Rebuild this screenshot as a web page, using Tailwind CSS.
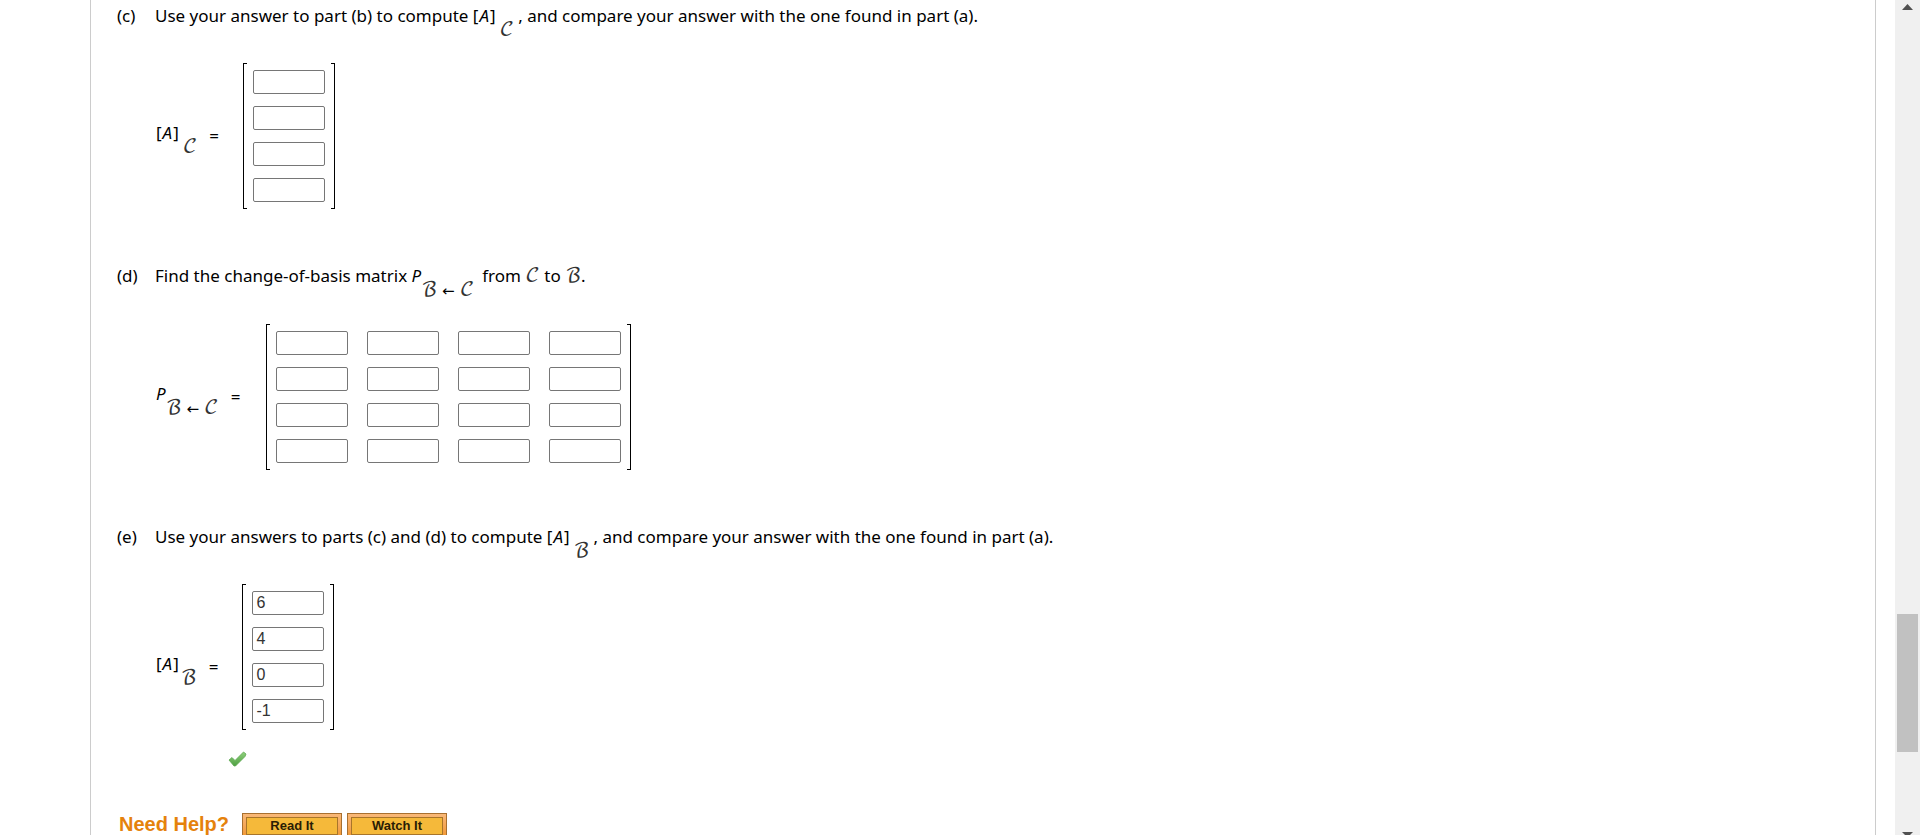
<!DOCTYPE html>
<html lang="en">
<head>
  <meta charset="UTF-8" />
  <meta name="viewport" content="width=device-width, initial-scale=1.0"/>
  <title>Change of Basis</title>
  <script src="https://cdn.jsdelivr.net/npm/@tailwindcss/browser@4"></script>
</head>
<body class="bg-white h-screen flex overflow-hidden text-[17px] leading-6 text-black font-['Noto_Sans',sans-serif]">

  <!-- Question -->
  <main class="flex-1 self-stretch ml-[90px] mr-[19px] pl-[26px] pt-1 border-x border-[#ccc]">

    <!-- Part (c) -->
    <section class="flex mb-[55px]">
      <span class="w-[38px] shrink-0">(c)</span>
      <div class="flex-1">
        <p class="mb-[33px]">Use your answer to part (b) to compute&nbsp;[<i class="px-px">A</i>]<span class="mx-1 align-[-14px] text-[20px] leading-[0] font-['DejaVu_Math_TeX_Gyre',serif] text-[#333]">𝒞</span>, and compare your answer with the one found in part (a).</p>
        <div class="flex items-center">
          <div class="ml-px mr-6 pb-1">[<i class="px-px">A</i>]<span class="ml-1 align-[-14px] text-[20px] leading-[0] font-['DejaVu_Math_TeX_Gyre',serif] text-[#333]">𝒞</span><span class="ml-3 align-[-3px] leading-[0]">=</span></div>
          <div id="matrixC" class="flex"></div>
        </div>
      </div>
    </section>

    <!-- Part (d) -->
    <section class="flex mb-[55px]">
      <span class="w-[38px] shrink-0">(d)</span>
      <div class="flex-1">
        <p class="mb-[33px]">Find the change-of-basis matrix <i>P</i><span class="mr-2 align-[-14px] text-[20px] leading-[0] font-['DejaVu_Math_TeX_Gyre',serif] text-[#333]">ℬ<span class="mx-[5px] text-[15px] text-black font-['DejaVu_Sans',sans-serif]">←</span>𝒞</span>from <span class="text-[20px] leading-[0] font-['DejaVu_Math_TeX_Gyre',serif] text-[#333]">𝒞</span> to <span class="text-[20px] leading-[0] font-['DejaVu_Math_TeX_Gyre',serif] text-[#333]">ℬ</span>.</p>
        <div class="flex items-center">
          <div class="ml-px mr-[26px] pb-1"><i>P</i><span class="align-[-14px] text-[20px] leading-[0] font-['DejaVu_Math_TeX_Gyre',serif] text-[#333]">ℬ<span class="mx-[5px] text-[15px] text-black font-['DejaVu_Sans',sans-serif]">←</span>𝒞</span><span class="ml-3 align-[-3px] leading-[0]">=</span></div>
          <div id="matrixP" class="flex"></div>
        </div>
      </div>
    </section>

    <!-- Part (e) -->
    <section class="flex mb-[46px]">
      <span class="w-[38px] shrink-0">(e)</span>
      <div class="flex-1">
        <p class="mb-[33px]">Use your answers to parts (c) and (d) to compute&nbsp;[<i class="px-px">A</i>]<span class="mx-1 align-[-14px] text-[20px] leading-[0] font-['DejaVu_Math_TeX_Gyre',serif] text-[#333]">ℬ</span>, and compare your answer with the one found in part (a).</p>
        <div class="flex items-center">
          <div class="ml-px mr-6 pt-4">[<i class="px-px">A</i>]<span class="ml-[2px] align-[-14px] text-[20px] leading-[0] font-['DejaVu_Math_TeX_Gyre',serif] text-[#333]">ℬ</span><span class="ml-3 align-[-3px] leading-[0]">=</span></div>
          <div id="matrixB" class="flex"></div>
        </div>
        <svg class="mt-[21px] ml-[73px] w-[19px] h-4" viewBox="0 0 19 16" role="img" aria-label="Correct">
          <defs>
            <linearGradient id="tick" x1="0" y1="0" x2="0" y2="1">
              <stop offset="0" stop-color="#8fd07c"/>
              <stop offset="1" stop-color="#4f9f42"/>
            </linearGradient>
          </defs>
          <path d="M1 9 L4 6.500 L7 9.500 L15.500 1 L18 3 L17 5.500 L7.500 15 L6 15 Z" fill="url(#tick)" stroke="#5da850" stroke-width=".8" stroke-linejoin="round"/>
        </svg>
      </div>
    </section>

    <!-- Help -->
    <div class="flex items-start gap-[5px] font-['Liberation_Sans',Arial,sans-serif] font-bold">
      <h2 class="ml-[2px] mr-2 text-[20px] leading-[22px] text-[#e5820c]">Need Help?</h2>
      <button class="w-[100px] p-[3px] border border-[#a9702f] bg-linear-to-b from-[#f9b878] to-[#f0952a]"><span class="block border border-[#a8752a] bg-[#f5b93a] text-[13px] leading-4 text-[#2a1d05]">Read It</span></button>
      <button class="w-[100px] p-[3px] border border-[#a9702f] bg-linear-to-b from-[#f9b878] to-[#f0952a]"><span class="block border border-[#a8752a] bg-[#f5b93a] text-[13px] leading-4 text-[#2a1d05]">Watch It</span></button>
    </div>

  </main>

  <!-- Scrollbar -->
  <aside class="w-[25px] shrink-0 bg-[#f0f0f0] flex flex-col items-center pt-1" aria-hidden="true">
    <svg class="w-[11px] h-[6px]" viewBox="0 0 11 6"><path d="M5.500 0 L11 6 H0 Z" fill="#505050"/></svg>
    <div class="grow-[604]"></div>
    <div class="w-[21px] h-[138px] bg-[#c1c1c1]"></div>
    <div class="grow-[80]"></div>
    <svg class="w-[11px] h-[3px] shrink-0" viewBox="0 0 11 3"><path d="M0 0 H11 L8 3 H3 Z" fill="#505050"/></svg>
  </aside>

  <!-- Scripts -->
  <script>
    const matrices = [
      { id: 'matrixC', name: '[A]C', rows: [[''], [''], [''], ['']] },
      { id: 'matrixP', name: 'P', rows: [['', '', '', ''], ['', '', '', ''], ['', '', '', ''], ['', '', '', '']] },
      { id: 'matrixB', name: '[A]B', rows: [['6'], ['4'], ['0'], ['-1']] }
    ];

    function renderMatrix(m) {
      const rows = m.rows.map((row, r) => `
        <div class="flex gap-[19px]">
          ${row.map((value, c) => `<input type="text" value="${value}" aria-label="${m.name} row ${r + 1} column ${c + 1}" class="block w-[72px] h-6 px-[3px] border border-[#767676] rounded-[2px] bg-white text-base text-[#333] font-['Liberation_Sans',Arial,sans-serif]">`).join('')}
        </div>
      `).join('');

      document.getElementById(m.id).innerHTML = `
        <div class="w-1 border-y border-l border-black"></div>
        <div class="px-[6px] py-[7px] flex flex-col gap-3">${rows}</div>
        <div class="w-1 border-y border-r border-black"></div>
      `;
    }

    matrices.forEach(renderMatrix);
  </script>
</body>
</html>
